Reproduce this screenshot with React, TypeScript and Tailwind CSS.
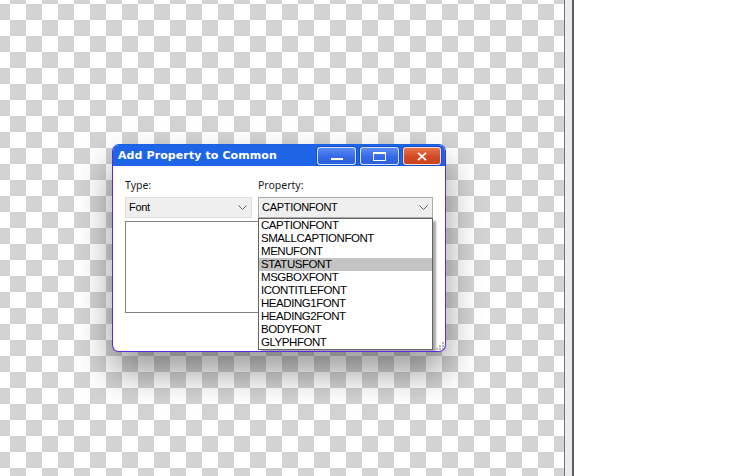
import React from "react";

const fonts = [
  "CAPTIONFONT",
  "SMALLCAPTIONFONT",
  "MENUFONT",
  "STATUSFONT",
  "MSGBOXFONT",
  "ICONTITLEFONT",
  "HEADING1FONT",
  "HEADING2FONT",
  "BODYFONT",
  "GLYPHFONT",
];

function Chevron() {
  return (
    <svg width="9" height="5" viewBox="0 0 9 5" className="shrink-0">
      <path d="M0.5 0.5 L4.5 4.5 L8.5 0.5" fill="none" stroke="#606060" strokeWidth="1" />
    </svg>
  );
}

function CaptionButton({ kind }: { kind: "min" | "max" | "close" }) {
  const base =
    "h-[18px] rounded-[3px] border border-white/80 flex items-center justify-center shadow-[0_0_0_1px_rgba(0,40,140,0.35)]";
  if (kind === "close") {
    return (
      <div className={`${base} w-[38px] bg-[linear-gradient(#e8744a,#d24a22_55%,#c94420)]`}>
        <svg width="10" height="9" viewBox="0 0 10 9">
          <path d="M1 0.8 L9 8.2 M9 0.8 L1 8.2" stroke="white" strokeWidth="1.8" />
        </svg>
      </div>
    );
  }
  return (
    <div className={`${base} w-[39px] bg-[linear-gradient(#5b8cf4,#3569e6_55%,#2d5fdc)]`}>
      {kind === "min" ? (
        <div className="mt-[5px] w-[12px] h-[2px] bg-white" />
      ) : (
        <div className="w-[13px] h-[9px] border border-white border-t-2" />
      )}
    </div>
  );
}

export default function App() {
  return (
    <div className="w-[735px] h-[476px] flex overflow-hidden bg-white">
      {/* transparent canvas */}
      <div className="relative w-[564px] h-full bg-[conic-gradient(#d3d3d3_0_25%,#ffffff_0_50%,#d3d3d3_0_75%,#ffffff_0)] bg-size-[32px_32px] bg-position-[-6px_-12px]">
        <div className="absolute left-[112px] top-[144px] w-[334px] h-[208px] rounded-[7px] border border-[#5a2ae6] border-t-[#1c5fe0] bg-white shadow-[0_20px_36px_rgba(0,0,0,0.4)] flex flex-col overflow-hidden">
          {/* title bar */}
          <div className="h-[21px] bg-[#1e64e6] flex items-start pl-[5px] pr-[4px] shrink-0">
            <span className="mt-[4px] text-white font-bold text-[11px] leading-[14px] [font-family:'DejaVu_Sans',sans-serif] tracking-[0.1px]">
              Add Property to Common
            </span>
            <div className="ml-auto mt-[2px] flex gap-[4px]">
              <CaptionButton kind="min" />
              <CaptionButton kind="max" />
              <CaptionButton kind="close" />
            </div>
          </div>

          {/* body */}
          <div className="flex flex-col pl-[12px] [font-family:'Liberation_Sans',Arial,sans-serif] text-black">
            <div className="mt-[12px] h-[15px] flex gap-[6px] text-[10.5px] leading-[15px] text-[#1b1b1b] [font-family:'Noto_Sans',sans-serif]">
              <div className="w-[127px]">Type:</div>
              <div className="w-[175px]">Property:</div>
            </div>
            <div className="mt-[4px] flex gap-[6px]">
              <div className="w-[127px] h-[21px] border border-[#dedede] bg-[#efefef] flex items-center pl-[3px] pr-[4px] text-[11px] tracking-[-0.3px]">
                <span className="flex-1">Font</span>
                <Chevron />
              </div>
              <div className="w-[175px] h-[21px] border border-[#adadad] bg-[#efefef] flex items-center pl-[3px] pr-[4px] text-[11px] tracking-[-0.3px]">
                <span className="flex-1">CAPTIONFONT</span>
                <Chevron />
              </div>
            </div>
            <div className="mt-[3px] w-[308px] h-[92px] border border-[#828282] bg-white" />
          </div>

          {/* open property list */}
          <div className="absolute left-[145px] top-[73px] w-[175px] h-[132px] border border-[#646464] bg-white shadow-[3px_3px_2px_rgba(0,0,0,0.35)] [font-family:'Liberation_Sans',Arial,sans-serif] text-[11.5px] tracking-[-0.45px] text-black">
            {fonts.map((f) => (
              <div
                key={f}
                className={`h-[13px] leading-[13px] pl-[2px] ${f === "STATUSFONT" ? "bg-[#c3c3c3]" : ""}`}
              >
                {f}
              </div>
            ))}
          </div>

          {/* size grip */}
          <svg className="absolute right-[1px] bottom-[1px]" width="8" height="8" viewBox="0 0 8 8">
            <g fill="#b8b8b8">
              <rect x="6" y="0" width="2" height="2" />
              <rect x="3" y="3" width="2" height="2" />
              <rect x="6" y="3" width="2" height="2" />
              <rect x="0" y="6" width="2" height="2" />
              <rect x="3" y="6" width="2" height="2" />
              <rect x="6" y="6" width="2" height="2" />
            </g>
          </svg>
        </div>
      </div>

      {/* splitter */}
      <div className="w-[10px] h-full bg-[#ebeaf1] border-l border-l-[#72727e] border-r-2 border-r-[#5c5c68]" />

      <div className="flex-1 h-full bg-white" />
    </div>
  );
}
